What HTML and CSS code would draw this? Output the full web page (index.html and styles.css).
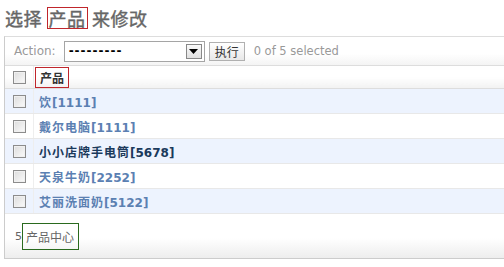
FILE: index.html
```html
<!DOCTYPE html>
<html>
<head>
<meta charset="utf-8">
<link rel="stylesheet" href="styles.css">
</head>
<body>
<h1 class="title">选择 <span class="mark-red">产品</span> 来修改</h1>
<div class="module">
  <div class="actions">
    <label class="action-label">Action:</label>
    <div class="select">
      <span class="select-text">---------</span>
      <span class="select-btn"><svg width="9" height="5" viewBox="0 0 9 5"><path d="M0 0h9L4.5 5z" fill="#000"/></svg></span>
    </div>
    <button class="go">执行</button>
    <span class="counter">0 of 5 selected</span>
  </div>
  <table class="results">
    <thead>
      <tr>
        <th class="check-col"><span class="cb"></span></th>
        <th class="name-col"><span class="head-mark">产品</span></th>
      </tr>
    </thead>
    <tbody>
      <tr class="row1"><td class="check-col"><span class="cb"></span></td><td><a class="link"><span class="zh">饮</span>[1111]</a></td></tr>
      <tr class="row2"><td class="check-col"><span class="cb"></span></td><td><a class="link"><span class="zh">戴尔电脑</span>[1111]</a></td></tr>
      <tr class="row1"><td class="check-col"><span class="cb"></span></td><td><a class="link dark"><span class="zh">小小店牌手电筒</span>[5678]</a></td></tr>
      <tr class="row2"><td class="check-col"><span class="cb"></span></td><td><a class="link"><span class="zh">天泉牛奶</span>[2252]</a></td></tr>
      <tr class="row1"><td class="check-col"><span class="cb"></span></td><td><a class="link"><span class="zh">艾丽洗面奶</span>[5122]</a></td></tr>
    </tbody>
  </table>
  <div class="paginator">5<span class="mark-green">产品中心</span></div>
</div>
</body>
</html>
```
FILE: styles.css
```css
html, body {
  margin: 0;
  padding: 0;
  overflow: hidden;
  background: #fff;
}
body {
  font-family: "DejaVu Sans", Verdana, "Noto Sans CJK SC", sans-serif;
  font-size: 11px;
  color: #333;
  width: 520px;
}
.title {
  margin: 0;
  padding: 7px 0 0 5px;
  height: 29px;
  box-sizing: border-box;
  font-family: "Noto Sans CJK SC", sans-serif;
  font-size: 18px;
  line-height: 22px;
  font-weight: normal;
  color: #666;
  letter-spacing: 0.5px;
  -webkit-text-stroke: 0.4px #666;
}
.mark-red {
  border: 1px solid #c0262c;
  padding: 0 1px;
  display: inline-block;
  line-height: 20px;
}
.module {
  margin: 7px 0 0 4px;
  border-left: 1px solid #ccc;
  border-bottom: 1px solid #ccc;
  border-top: 1px solid #ddd;
}
.actions {
  height: 29px;
  box-sizing: border-box;
  display: flex;
  align-items: center;
  padding-left: 9px;
  background: linear-gradient(#fff 60%, #f4f4f4);
  border-bottom: 1px solid #ddd;
  color: #999;
}
.action-label {
  font-size: 12px;
  margin-right: 8px;
}
.select {
  width: 141px;
  height: 21px;
  box-sizing: border-box;
  border: 1px solid #a5a5a5;
  display: flex;
  align-items: center;
  background: #fff;
  color: #000;
}
.select-text {
  padding-left: 4px;
  font-size: 12px;
  font-weight: bold;
  letter-spacing: 1px;
  flex: 1;
}
.select-btn {
  width: 16px;
  height: 15px;
  margin-right: 2px;
  border: 1px solid #888;
  box-sizing: border-box;
  background: linear-gradient(#fafafa, #e0e0e0);
  display: flex;
  align-items: center;
  justify-content: center;
}
.go {
  margin-left: 4px;
  height: 19px;
  padding: 0 5px;
  border: 1px solid #b0b0b0;
  background: linear-gradient(#fff, #e8e8e8);
  font-family: "Noto Sans CJK SC", sans-serif;
  font-size: 12px;
  line-height: 17px;
  color: #333;
}
.counter {
  margin-left: 9px;
  font-size: 11.5px;
  color: #999;
}
.results {
  border-collapse: collapse;
  width: 100%;
}
.results th, .results td {
  padding: 0;
  text-align: left;
  vertical-align: middle;
}
.results thead th {
  height: 22px;
  background: linear-gradient(#fff 50%, #f2f2f2);
  border-bottom: 1px solid #ddd;
}
.check-col {
  width: 28px;
  border-right: 1px solid #eee;
}
.check-col .cb {
  display: block;
  margin-left: 8px;
}
.cb {
  width: 11px;
  height: 11px;
  border: 1px solid #8c8c8c;
  background: linear-gradient(135deg, #dcdcdc, #fbfbfb);
  box-shadow: inset 0 0 0 1px #f0f0f0;
}
.name-col {
  padding-left: 1px !important;
}
.head-mark {
  display: inline-block;
  border: 1px solid #c0262c;
  padding: 0 4px;
  height: 19px;
  line-height: 19px;
  font-family: "Noto Sans CJK SC", sans-serif;
  font-size: 12px;
  font-weight: bold;
  color: #333;
}
.results tbody td {
  height: 24px;
  border-bottom: 1px solid #e8e8e8;
}
.results tbody td:not(.check-col) {
  padding-left: 5px;
}
.row1 td { background: #edf3fe; }
.row2 td { background: #fff; }
.link {
  font-family: "DejaVu Sans", "Noto Sans CJK SC", sans-serif;
  font-size: 12px;
  font-weight: bold;
  color: #5b80b2;
}
.zh {
  font-family: "Noto Sans CJK SC", sans-serif;
  letter-spacing: 1px;
}
.link.dark { color: #1b3a5c; }
.paginator {
  height: 44px;
  box-sizing: border-box;
  display: flex;
  align-items: center;
  padding-left: 10px;
  font-size: 11px;
  color: #666;
  background: linear-gradient(#fff 55%, #ededed);
}
.mark-green {
  display: inline-block;
  border: 1px solid #2a6a1e;
  height: 25px;
  line-height: 25px;
  padding: 0 4px 0 3px;
  font-family: "Noto Sans CJK SC", sans-serif;
  font-size: 12px;
  color: #666;
}
```
